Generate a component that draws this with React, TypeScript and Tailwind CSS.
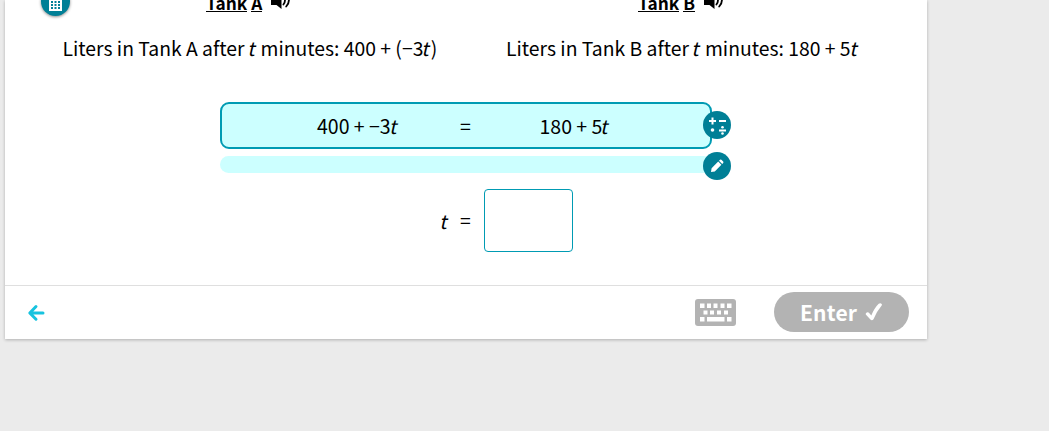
import type { ReactNode } from "react";

const T = () => <i className="inline-block -skew-x-[13deg] not-italic">t</i>;

function Speaker() {
  return (
    <svg width="20" height="18" viewBox="0 0 20 18" fill="none" className="mt-[-8px] ml-[9px]">
      <path d="M0 6h4l6.500-5v16l-5-4H0z" fill="#000" />
      <path d="M13 5.500q2.200 3.500-.6 7M16 2.500q4.200 6.500-.8 12" stroke="#000" strokeWidth="1.8" strokeLinecap="round" />
    </svg>
  );
}

function Tank({ name }: { name: string }) {
  return (
    <div className="flex h-[28px] items-start text-[17.3px] leading-[28px] font-bold">
      <span className="mt-[-11px] flex gap-[4px]">
        <span className="h-[23px] border-b border-black">Tank</span>
        <span className="h-[23px] border-b border-black">{name}</span>
      </span>
      <Speaker />
    </div>
  );
}

function Round({ children }: { children: ReactNode }) {
  return (
    <span className="flex h-[28px] w-[28px] items-center justify-center rounded-full bg-[#007f96]">{children}</span>
  );
}

export default function App() {
  return (
    <div className="h-[431px] w-full overflow-hidden bg-[#ebebeb] pl-[5px] font-['Noto_Sans_CJK_SC',sans-serif] text-[19.35px] text-black">
      <main className="flex h-[339px] w-[922px] flex-col bg-white shadow-[0_1px_3px_rgba(0,0,0,0.25)]">
        <div className="flex h-[33px]">
          <div className="mt-[-13px] ml-[36px] flex h-[29px] w-[29px] shrink-0 items-center justify-center rounded-full bg-[#007f96] shadow-[0_1px_3px_rgba(0,0,0,0.45)]">
            <svg width="13" height="16" viewBox="0 0 13 16" className="mt-[2px]">
              <path d="M0 0h13v16H0z" fill="#fff" />
              <path d="M2 1h9v3H2zM2 6h2v2H2zM5.500 6h2v2h-2zM9 6h2v2H9zM2 9h2v2H2zM5.500 9h2v2h-2zM9 9h2v2H9zM2 12h2v2H2zM5.500 12h2v2h-2zM9 12h2v2H9z" fill="#007f96" />
            </svg>
          </div>
          <div className="ml-[136px] w-[432px] shrink-0">
            <Tank name="A" />
          </div>
          <Tank name="B" />
        </div>
        <div className="flex h-[69px] pl-[57.500px] leading-[30px] whitespace-nowrap">
          <div className="w-[443.500px] shrink-0">Liters in Tank A after <T /> minutes: 400 + (−3<T />)</div>
          <div>Liters in Tank B after <T /> minutes: 180 + 5<T /></div>
        </div>
        <div className="ml-[215px] flex h-[47px] w-[511px] items-center">
          <div className="flex h-[47px] w-[492px] shrink-0 items-start rounded-[9px] border-2 border-[#009bb3] bg-[#ccffff] pt-[7px] text-[19.5px] leading-[29px] whitespace-nowrap">
            <span className="ml-[95px] w-[143px]">400 + −3<T /></span>
            <span className="w-[79.500px]">=</span>
            <span>180 + 5<T /></span>
          </div>
          <div className="mt-[-2px] ml-[-9px]">
            <Round>
              <svg width="20" height="20" viewBox="0 0 20 20" stroke="#fff" strokeWidth="2" fill="#fff">
                <path d="M2 6h7M5.500 2.500v7M12 6h7M12 15.500h7" fill="none" />
                <circle cx="5.500" cy="15" r="1.8" stroke="none" />
                <circle cx="15.500" cy="12.300" r="1.300" stroke="none" />
                <circle cx="15.500" cy="18.500" r="1.300" stroke="none" />
              </svg>
            </Round>
          </div>
        </div>
        <div className="ml-[215px] flex h-[40px] items-start pt-[3px]">
          <div className="mt-[4px] h-[17px] w-[492px] rounded-[9px] bg-[#ccffff]" />
          <div className="mt-[-0.500px] ml-[-9px]">
            <Round>
              <svg width="14" height="14" viewBox="0 0 14 14" fill="#fff">
                <path d="M1.600 9.200L8.200 2.600l3.200 3.200-6.600 6.600L1 13zM9 1.800l1-1q.7-.5 1.400 0l1.800 1.800q.5.7 0 1.400l-1 1z" />
              </svg>
            </Round>
          </div>
        </div>
        <div className="ml-[436px] flex h-[96px] items-start">
          <span className="mt-[17px] w-[19px] leading-[30px]"><T /></span>
          <span className="mt-[16px] w-[24px] leading-[30px]">=</span>
          <span className="h-[63px] w-[89px] rounded-[4px] border border-[#009bb3] bg-white" />
        </div>
        <footer className="flex h-[54px] items-start border-t border-[#dfdfdf]">
          <svg width="18" height="18" viewBox="0 0 18 18" className="mt-[18px] ml-[22px]" fill="none" stroke="#17c3df" strokeWidth="3" strokeLinecap="round" strokeLinejoin="round">
            <path d="M9 2.500L2.800 9 9 15.200M3.500 9h12.500" />
          </svg>
          <svg width="41" height="27" viewBox="0 0 41 27" className="mt-[13px] ml-[650px]">
            <rect width="41" height="27" rx="3" fill="#b3b3b3" />
            <path fill="#fff" d="M5 4.500h4.500v4.500H5zM12 4.500h4v4.500h-4zM18.500 4.500h4v4.500h-4zM25.500 4.500h4v4.500h-4zM32 4.500h4.500v4.500H32zM8.500 11.500h4v4h-4zM15 11.500h4v4h-4zM22 11.500h4v4h-4zM29 11.500h4v4h-4zM5 18h4.500v4.500H5zM12 18h17.500v4.500H12zM32 18h4.500v4.500H32z" />
          </svg>
          <button className="mt-[6px] ml-[38px] flex h-[40px] w-[135px] items-center rounded-full bg-[#b3b3b3] pl-[26px] text-left text-[21px] leading-[30px] font-bold tracking-[0.2px] text-white">
            <span className="w-[65px]">Enter</span>
            <svg width="18" height="18" viewBox="0 0 18 18" fill="#fff">
              <path d="M1 10.200q1.500-2.200 3.600.2l1.700 2.200Q9.300 5 13.700.8q1.800-1.200 3 .2.500.8-.2 1.700Q11.200 9 8.500 16.200q-1.400 1.800-3.100.4L1 11.700q-.5-.8 0-1.500z" />
            </svg>
          </button>
        </footer>
      </main>
    </div>
  );
}
